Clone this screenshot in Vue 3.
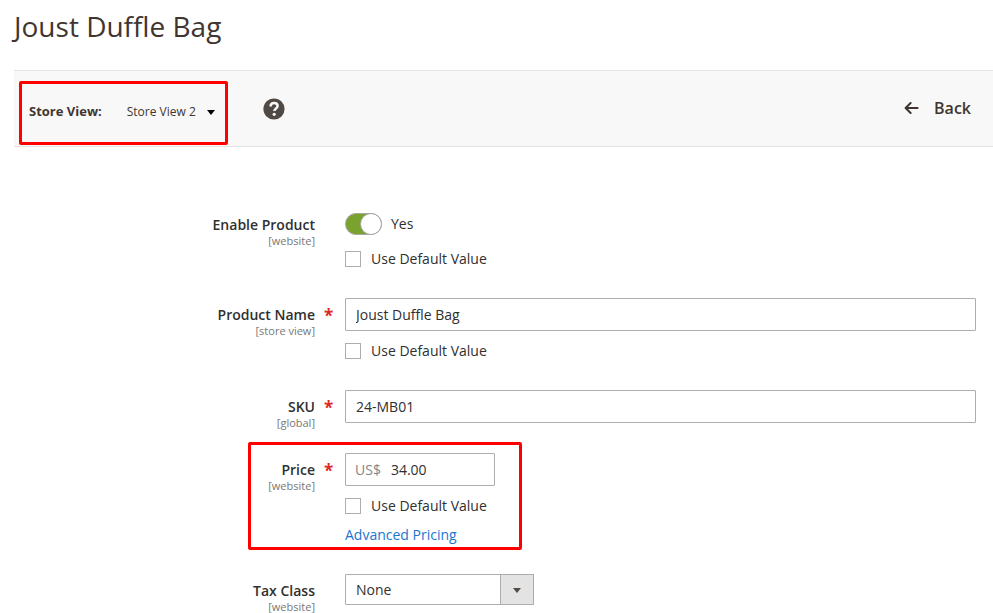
<script setup>
import { ref } from 'vue'

const enabled = ref(true)
const name = ref('Joust Duffle Bag')
const sku = ref('24-MB01')
const price = ref('34.00')
const taxClass = ref('None')
const useDefault = ref({ enabled: false, name: false, price: false })
</script>

<template>
  <div class="page">
    <h1 class="title">Joust Duffle Bag</h1>

    <header class="toolbar">
      <div class="switcher">
        <span id="store-label" class="switcher-label">Store View:</span>
        <button type="button" class="switcher-button" aria-describedby="store-label">
          Store View 2
          <svg class="caret" width="8" height="5" viewBox="0 0 8 5" aria-hidden="true">
            <path d="M0 0h8L4 5z" fill="#000" />
          </svg>
        </button>
      </div>
      <a href="#" class="help" aria-label="Help">
        <svg width="22" height="22" viewBox="0 0 22 22" aria-hidden="true">
          <circle cx="11" cy="11" r="10.6" fill="#514943" />
          <path d="M7.6 8.500C7.600 6.300 9 5.100 11.100 5.100s3.500 1.200 3.500 3c0 2.500-3.200 2.500-3.200 4.900" fill="none" stroke="#f8f8f8" stroke-width="2.500" />
          <circle cx="11.200" cy="16.300" r="1.600" fill="#f8f8f8" />
        </svg>
      </a>
      <button type="button" class="back">
        <svg width="15" height="12" viewBox="0 0 15 12" aria-hidden="true">
          <path d="M6.600 1L1.600 6l5 5M1.800 6H13.600" fill="none" stroke="#41362f" stroke-width="2" stroke-linecap="round" stroke-linejoin="round" />
        </svg>
        Back
      </button>
    </header>

    <form class="form" @submit.prevent>
      <div class="row">
        <label class="label" for="enabled">Enable Product<small>[website]</small></label>
        <span></span>
        <div class="control spaced">
          <div class="switch-line">
            <input id="enabled" v-model="enabled" type="checkbox" class="switch" />
            <span>{{ enabled ? 'Yes' : 'No' }}</span>
          </div>
          <label class="default"><input v-model="useDefault.enabled" type="checkbox" class="box" />Use Default Value</label>
        </div>
      </div>

      <div class="row">
        <label class="label" for="name">Product Name<small>[store view]</small></label>
        <span class="required">*</span>
        <div class="control spaced">
          <input id="name" v-model="name" type="text" class="text" />
          <label class="default"><input v-model="useDefault.name" type="checkbox" class="box" />Use Default Value</label>
        </div>
      </div>

      <div class="row">
        <label class="label" for="sku">SKU<small>[global]</small></label>
        <span class="required">*</span>
        <div class="control">
          <input id="sku" v-model="sku" type="text" class="text" />
        </div>
      </div>

      <div class="row highlighted">
        <label class="label" for="price">Price<small>[website]</small></label>
        <span class="required">*</span>
        <div class="control spaced">
          <div class="price">
            <span class="currency">US$</span>
            <input id="price" v-model="price" type="text" class="amount" />
          </div>
          <label class="default"><input v-model="useDefault.price" type="checkbox" class="box" />Use Default Value</label>
          <a href="#" class="link">Advanced Pricing</a>
        </div>
      </div>

      <div class="row">
        <label class="label" for="tax">Tax Class<small>[website]</small></label>
        <span></span>
        <div class="control">
          <div class="select">
            <select id="tax" v-model="taxClass">
              <option>None</option>
              <option>Taxable Goods</option>
            </select>
            <span class="select-arrow">
              <svg width="8" height="5" viewBox="0 0 8 5" aria-hidden="true">
                <path d="M0 0h8L4 5z" fill="#514943" />
              </svg>
            </span>
          </div>
        </div>
      </div>
    </form>
  </div>
</template>

<style>
body {
  margin: 0;
  background: #fff;
}
</style>

<style scoped>
.page {
  padding: 7px 0 0 14px;
  color: #303030;
  font: 14px/19px 'Open Sans', 'Noto Sans', sans-serif;
}

.page *,
.page *::before,
.page *::after {
  box-sizing: border-box;
}

input,
select,
button {
  margin: 0;
  font: inherit;
  color: inherit;
}

button {
  padding: 0;
  border: 0;
  background: none;
  cursor: pointer;
}

.title {
  margin: 0 0 25px;
  color: #41362f;
  font-size: 28px;
  font-weight: 400;
  line-height: 38px;
}

.toolbar {
  display: flex;
  align-items: center;
  padding: 10px 22px 1px 5px;
  border-top: 1px solid #e3e3e3;
  border-bottom: 1px solid #e3e3e3;
  background: #f8f8f8;
  color: #41362f;
}

.switcher {
  display: flex;
  align-items: center;
  gap: 25px;
  height: 64px;
  padding: 0 10px 4px 7px;
  border: 3px solid #f00;
  border-radius: 2px;
}

.switcher-label {
  font-size: 13px;
  font-weight: 700;
}

.switcher-button {
  display: flex;
  align-items: center;
  gap: 11px;
  font-size: 12px;
}

.caret {
  margin-top: 2px;
}

.help {
  display: flex;
  margin: 0 auto 8px 35px;
}

.back {
  display: flex;
  align-items: center;
  gap: 15px;
  margin-bottom: 10px;
  font-size: 16px;
  font-weight: 600;
}

.form {
  display: flex;
  flex-direction: column;
  gap: 23px;
  padding: 61px 17px 0 0;
}

.row {
  position: relative;
  display: grid;
  grid-template-columns: 301px 30px minmax(0, 1fr);
}

.label {
  padding-top: 7px;
  font-weight: 600;
  text-align: right;
}

.label small {
  display: block;
  color: #777;
  font-size: 11px;
  font-weight: 400;
  line-height: 14px;
}

.required {
  padding: 8px 0 0 9px;
  color: #e22626;
  font-size: 17px;
  font-weight: 700;
}

.control {
  display: flex;
  flex-direction: column;
  align-items: flex-start;
  gap: 10px;
}

.spaced {
  padding-bottom: 7px;
}

.switch-line {
  display: flex;
  align-items: center;
  gap: 9px;
  height: 31px;
}

.switch {
  appearance: none;
  width: 37px;
  height: 22px;
  border: 1px solid #aaa6a0;
  border-radius: 11px;
  background: #fff;
}

.switch::before {
  content: '';
  display: block;
  width: 22px;
  height: 22px;
  margin: -1px;
  border: 1px solid #aaa6a0;
  border-radius: 50%;
  background: #fff;
}

.switch:checked {
  background: #79a22e;
}

.switch:checked::before {
  margin-left: 14px;
}

.default {
  display: flex;
  align-items: center;
  gap: 10px;
}

.box {
  appearance: none;
  width: 16px;
  height: 16px;
  border: 1px solid #adadad;
  background: #fff;
}

.box:checked {
  background: #514943;
}

.text {
  width: 100%;
  height: 33px;
  padding: 0 10px;
  border: 1px solid #adadad;
  border-radius: 1px;
  background: #fff;
}

.price {
  display: flex;
  align-items: center;
  gap: 10px;
  width: 150px;
  height: 33px;
  padding: 0 9px;
  border: 1px solid #adadad;
  border-radius: 1px;
}

.currency {
  color: #858585;
}

.amount {
  flex: 1;
  min-width: 0;
  padding: 0;
  border: 0;
  background: none;
}

.link {
  color: #1a75d1;
  text-decoration: none;
}

.highlighted::after {
  content: '';
  position: absolute;
  top: -11px;
  left: 234px;
  width: 274px;
  height: 108px;
  border: 3px solid #f00;
  border-radius: 2px;
  pointer-events: none;
}

.select {
  display: grid;
  grid-template-columns: 155px 34px;
  height: 31px;
}

.select select {
  grid-area: 1 / 1 / 2 / 3;
  appearance: none;
  padding: 0 43px 0 10px;
  border: 1px solid #adadad;
  border-radius: 1px;
  background: #fff;
}

.select-arrow {
  grid-area: 1 / 2;
  display: flex;
  align-items: center;
  justify-content: center;
  padding-top: 2px;
  border: 1px solid #adadad;
  background: #e3e3e3;
  pointer-events: none;
}
</style>
